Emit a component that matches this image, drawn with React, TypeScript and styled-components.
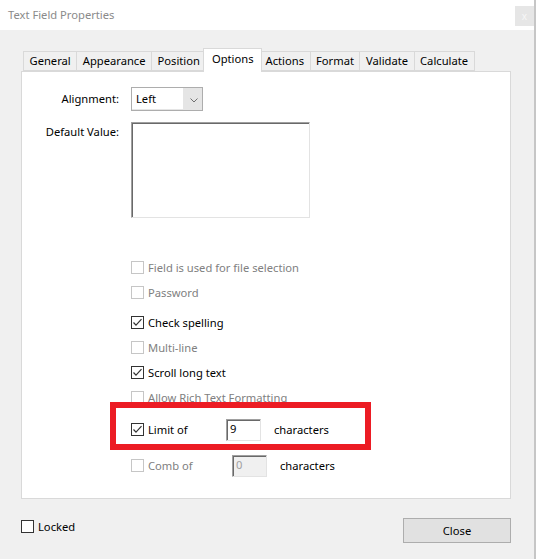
import styled, { createGlobalStyle } from "styled-components";

const GlobalStyle = createGlobalStyle`
  html, body {
    margin: 0;
    padding: 0;
    background: #ffffff;
  }
  body {
    font-family: "Noto Sans", "Liberation Sans", sans-serif;
    font-size: 11.2px;
    line-height: 16px;
    color: #000000;
  }
`;

const tabs = ["General", "Appearance", "Position", "Options", "Actions", "Format", "Validate", "Calculate"];
const activeTab = "Options";

const options = [
  { label: "Field is used for file selection", checked: false, disabled: true, gap: 0 },
  { label: "Password", checked: false, disabled: true, gap: 0 },
  { label: "Check spelling", checked: true, disabled: false, gap: 5 },
  { label: "Multi-line", checked: false, disabled: true, gap: 0 },
  { label: "Scroll long text", checked: true, disabled: false, gap: 0 },
  { label: "Allow Rich Text Formatting", checked: false, disabled: true, gap: 0 },
];

function CheckBox({ checked, disabled }: { checked?: boolean; disabled?: boolean }) {
  return (
    <Box $disabled={disabled}>
      {checked && (
        <svg width="11" height="11" viewBox="0 0 11 11">
          <polyline points="1.5,5.5 4,8.2 9.5,2.2" fill="none" stroke="#333" strokeWidth="1.2" />
        </svg>
      )}
    </Box>
  );
}

export default function App() {
  return (
    <>
      <GlobalStyle />
      <Window>
        {/* 타이틀 바 */}
        <TitleBar>
          <Title>Text Field Properties</Title>
          <CloseX>x</CloseX>
        </TitleBar>

        <Body>
          <TabStrip>
            {tabs.map((t) => (
              <Tab key={t} $active={t === activeTab}>
                {t}
              </Tab>
            ))}
          </TabStrip>

          <Panel>
            <FormGrid>
              <FieldName $center>Alignment:</FieldName>
              <Select>
                <SelectValue>Left</SelectValue>
                <svg width="8" height="5" viewBox="0 0 8 5">
                  <polyline points="0.5,0.5 4,4 7.5,0.5" fill="none" stroke="#707070" strokeWidth="1" />
                </svg>
              </Select>
              <FieldName>Default Value:</FieldName>
              <TextArea />
            </FormGrid>

            <CheckList>
              {options.map((o) => (
                <CheckRow key={o.label} $gap={o.gap} $disabled={o.disabled}>
                  <CheckBox checked={o.checked} disabled={o.disabled} />
                  {o.label}
                </CheckRow>
              ))}
              <CheckRow $gap={7}>
                <CheckBox checked />
                <RowLabel $width={78}>Limit of</RowLabel>
                <NumberBox>9</NumberBox>
                <Unit>characters</Unit>
                <Highlight />
              </CheckRow>
              <CheckRow $gap={11} $disabled>
                <CheckBox disabled />
                <RowLabel $width={84}>Comb of</RowLabel>
                <NumberBox $disabled>0</NumberBox>
                <Unit>characters</Unit>
              </CheckRow>
            </CheckList>
          </Panel>

          <Footer>
            <LockedLabel>
              <CheckBox />
              Locked
            </LockedLabel>
            <CloseButton>Close</CloseButton>
          </Footer>
        </Body>
      </Window>
    </>
  );
}

const Window = styled.div`
  width: 534px;
  height: 559px;
  border-right: 2px solid #c6c6c6;
  display: flex;
  flex-direction: column;
  background: #f0f0f0;
`;

const TitleBar = styled.div`
  height: 30px;
  flex-shrink: 0;
  background: #ffffff;
  display: flex;
  justify-content: space-between;
  align-items: flex-start;
  padding-left: 8px;
`;

const Title = styled.span`
  margin-top: 7px;
  color: #8a8a8a;
`;

const CloseX = styled.div`
  margin-top: 6px;
  width: 19px;
  height: 20px;
  background: #e6e6e6;
  color: #f7f7f7;
  font-size: 10px;
  display: flex;
  align-items: center;
  justify-content: center;
`;

const Body = styled.div`
  flex: 1;
  padding: 18px 23px 0 21px;
`;

const TabStrip = styled.div`
  display: flex;
  align-items: flex-end;
  height: 23px;
  padding-left: 2px;
`;

const Tab = styled.div<{ $active?: boolean }>`
  box-sizing: border-box;
  height: ${(p) => (p.$active ? 24 : 20)}px;
  margin: ${(p) => (p.$active ? "0 -2px -1px -3px" : "0 0 0 -1px")};
  padding: ${(p) => (p.$active ? "0 7.5px 3px" : "0 5.5px")};
  display: flex;
  align-items: center;
  border: 1px solid #d9d9d9;
  border-bottom: ${(p) => (p.$active ? "none" : "1px solid #d9d9d9")};
  background: ${(p) => (p.$active ? "#ffffff" : "#f0f0f0")};
  position: relative;
  z-index: ${(p) => (p.$active ? 1 : 0)};
  &:first-child {
    margin-left: 0;
  }
`;

const Panel = styled.div`
  box-sizing: border-box;
  height: 428px;
  border: 1px solid #d9d9d9;
  background: #ffffff;
  padding-top: 15px;
`;

const FormGrid = styled.div`
  display: grid;
  grid-template-columns: 97px 179px;
  column-gap: 12px;
  row-gap: 11px;
  align-items: start;
`;

const FieldName = styled.div<{ $center?: boolean }>`
  justify-self: end;
  align-self: ${(p) => (p.$center ? "center" : "start")};
  margin-top: ${(p) => (p.$center ? 0 : 2)}px;
`;

const Select = styled.div`
  box-sizing: border-box;
  width: 72px;
  height: 24px;
  border: 1px solid #adadad;
  background: #e5e5e5;
  display: flex;
  align-items: flex-start;
  gap: 7px;
  svg {
    margin-top: 10px;
  }
`;

const SelectValue = styled.div`
  width: 51px;
  height: 21px;
  background: #ffffff;
  padding-left: 4px;
  box-sizing: border-box;
  line-height: 21px;
`;

const TextArea = styled.div`
  box-sizing: border-box;
  width: 179px;
  height: 96px;
  border: 1px solid;
  border-color: #a0a0a0 #e3e3e3 #e3e3e3 #a0a0a0;
  box-shadow: inset 1px 1px 0 #696969;
  background: #ffffff;
`;

const CheckList = styled.div`
  margin-top: 37px;
  padding-left: 109px;
  display: flex;
  flex-direction: column;
`;

const CheckRow = styled.div<{ $gap?: number; $disabled?: boolean }>`
  position: relative;
  height: 25px;
  margin-top: ${(p) => p.$gap ?? 0}px;
  display: flex;
  align-items: center;
  color: ${(p) => (p.$disabled ? "#808080" : "#000000")};
`;

const Box = styled.span<{ $disabled?: boolean }>`
  box-sizing: border-box;
  width: 13px;
  height: 13px;
  flex-shrink: 0;
  margin-right: 4px;
  border: 1px solid ${(p) => (p.$disabled ? "#c6c6c6" : "#333333")};
  background: #ffffff;
  display: flex;
  align-items: center;
  justify-content: center;
`;

const RowLabel = styled.span<{ $width: number }>`
  width: ${(p) => p.$width}px;
`;

const NumberBox = styled.div<{ $disabled?: boolean }>`
  box-sizing: border-box;
  width: 35px;
  height: 22px;
  padding-left: 3px;
  border: 1px solid;
  border-color: #a0a0a0 #e3e3e3 #e3e3e3 #a0a0a0;
  box-shadow: inset 1px 1px 0 #696969;
  background: ${(p) => (p.$disabled ? "#f0f0f0" : "#ffffff")};
  color: ${(p) => (p.$disabled ? "#a0a0a0" : "#000000")};
  line-height: 18px;
`;

const Unit = styled.span`
  margin-left: 13px;
  color: #000000;
`;

// 빨간 강조 테두리 (주석 표시)
const Highlight = styled.div`
  position: absolute;
  left: -21px;
  top: -15px;
  width: 261px;
  height: 48px;
  box-sizing: border-box;
  border: 6px solid #ec1c24;
  z-index: 2;
  pointer-events: none;
`;

const Footer = styled.div`
  display: flex;
  justify-content: space-between;
  align-items: flex-start;
  padding-top: 19px;
`;

const LockedLabel = styled.div`
  display: flex;
  align-items: center;
  margin-top: 1px;
  height: 15px;
`;

const CloseButton = styled.button`
  box-sizing: border-box;
  width: 108px;
  height: 25px;
  border: 1px solid #adadad;
  background: #e1e1e1;
  font-family: inherit;
  font-size: inherit;
  color: #000000;
  padding: 0;
`;
